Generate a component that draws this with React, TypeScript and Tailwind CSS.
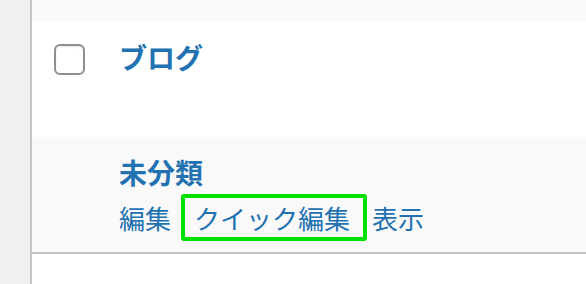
const font = { fontFamily: '"Noto Sans CJK JP", "Noto Sans", sans-serif' };

function Checkbox() {
  return (
    <span className="block w-[31px] h-[31px] rounded-[6px] border-2 border-[#8c8f94] bg-white shadow-[inset_0_1px_2px_rgba(0,0,0,0.1)]" />
  );
}

export default function App() {
  return (
    <div className="flex w-[586px] h-[284px] overflow-hidden bg-[#f0f0f1] text-[#2271b1]" style={font}>
      {/* admin menu gap */}
      <div className="w-[30px] shrink-0" />

      <div className="flex-1 flex flex-col border-l-2 border-[#c3c4c7] bg-white">
        <div className="h-[22px] bg-[#f9f9f9]" />

        {/* ブログ row */}
        <div className="h-[115px] bg-white flex items-start pt-[22px] pl-[22px]">
          <Checkbox />
          <a className="ml-[34px] mt-[-6px] text-[28px] leading-[38px] font-bold">ブログ</a>
        </div>

        {/* 未分類 row */}
        <div className="h-[117px] bg-[#f9f9f9] border-b-2 border-[#c3c4c7] pl-[87px] pt-[16px]">
          <a className="block text-[28px] leading-[38px] font-bold">未分類</a>
          <div className="flex items-center text-[26px] leading-[36px] mt-[3px]">
            <a>編集</a>
            <span className="ml-[10px] h-[47px] flex items-center border-4 border-[#00e000] rounded-[3px] pl-[9px] pr-[13px]">
              クイック編集
            </span>
            <a className="ml-[5px]">表示</a>
          </div>
        </div>

        <div className="flex-1 bg-white" />
      </div>
    </div>
  );
}
